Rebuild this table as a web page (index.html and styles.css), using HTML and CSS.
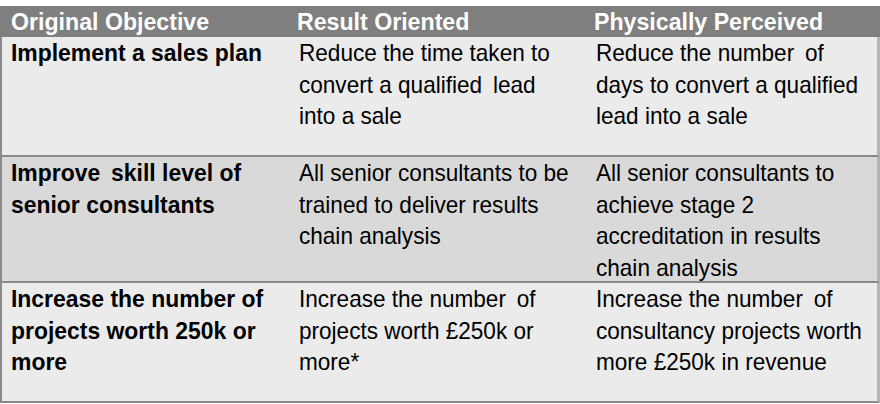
FILE: index.html
```html
<!DOCTYPE html>
<html>
<head>
<meta charset="utf-8">
<link rel="stylesheet" href="styles.css">
</head>
<body>
<div class="table">
  <div class="row head">
    <div class="cell"><span class="t">Original Objective</span></div>
    <div class="cell"><span class="t">Result Oriented</span></div>
    <div class="cell"><span class="t">Physically Perceived</span></div>
  </div>
  <div class="row r1 light">
    <div class="cell key"><span class="t">Implement a sales plan</span></div>
    <div class="cell"><span class="t">Reduce the time taken to<br>convert a qualified&thinsp; lead<br>into a sale</span></div>
    <div class="cell"><span class="t">Reduce the number&thinsp; of<br>days to convert a qualified<br>lead into a sale</span></div>
  </div>
  <div class="row r2 dark">
    <div class="cell key"><span class="t">Improve&thinsp; skill level of<br>senior consultants</span></div>
    <div class="cell"><span class="t">All senior consultants to be<br>trained to deliver results<br>chain analysis</span></div>
    <div class="cell"><span class="t">All senior consultants to<br>achieve stage 2<br>accreditation in results<br>chain analysis</span></div>
  </div>
  <div class="row r3 light">
    <div class="cell key"><span class="t">Increase the number of<br>projects worth 250k or<br>more</span></div>
    <div class="cell"><span class="t">Increase the number&thinsp; of<br>projects worth £250k or<br>more*</span></div>
    <div class="cell"><span class="t">Increase the number&thinsp; of<br>consultancy projects worth<br>more £250k in revenue</span></div>
  </div>
</div>
</body>
</html>
```
FILE: styles.css
```css
html, body {
  margin: 0;
  padding: 0;
  background: #ffffff;
}
body {
  padding-top: 6px;
  font-family: "Liberation Sans", Arial, sans-serif;
}
.table {
  width: 880px;
  display: flex;
  flex-direction: column;
}
.row {
  display: grid;
  grid-template-columns: 286px 297px 297px;
  box-sizing: border-box;
}
.t {
  display: inline-block;
  white-space: nowrap;
  transform-origin: left top;
}
.head {
  height: 31px;
  background: #7f7f7f;
  color: #ffffff;
  font-weight: bold;
  font-size: 23.5px;
  line-height: 33px;
  overflow: hidden;
}
.head .t {
  transform: scaleX(0.985);
}
.cell {
  padding-left: 11px;
}
.light { background: #ebebeb; }
.dark { background: #d9d9d9; }
.r1, .r2, .r3 {
  border-left: 2px solid #8a8a8a;
  border-right: 3px solid #b4b4b4;
  border-bottom: 2px solid #8a8a8a;
  color: #000;
  font-size: 24px;
  line-height: 31.7px;
}
.r1 .t, .r2 .t, .r3 .t {
  transform: scaleX(0.94);
}
.r1 .key .t, .r2 .key .t, .r3 .key .t {
  transform: scaleX(0.955);
}
.r1 { height: 120px; }
.r2 { height: 126px; }
.r3 { height: 120px; }
.r1 .cell:first-child, .r2 .cell:first-child, .r3 .cell:first-child { padding-left: 9px; }
.key { font-weight: bold; }
```
